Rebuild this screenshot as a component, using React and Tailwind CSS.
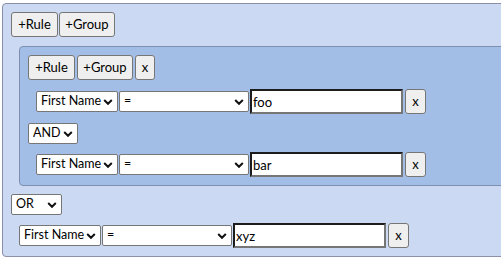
import React from 'react';

const font = { fontFamily: 'Lato, "Noto Sans", sans-serif' };

const Chevron = () => (
  <svg className="pointer-events-none absolute right-[5px] top-1/2 -translate-y-1/2" width="10" height="7" viewBox="0 0 10 7">
    <path d="M1.2 1.5l3.8 3.8 3.8-3.8" fill="none" stroke="#111" strokeWidth="2" />
  </svg>
);

const Select = ({ value, options, width }) => (
  <span className={`relative flex ${width}`}>
    <select
      defaultValue={value}
      className="h-[21px] w-full appearance-none rounded-[2px] border border-[#767676] bg-white pl-[4px] pr-[8px] text-[12.5px] leading-none text-black outline-none"
    >
      {options.map((o) => (
        <option key={o}>{o}</option>
      ))}
    </select>
    <Chevron />
  </span>
);

const Btn = ({ children, className = '' }) => (
  <button className={`h-[25px] rounded-[3px] border border-[#767676] bg-[#efefef] text-[13px] leading-none text-black ${className}`}>
    {children}
  </button>
);

const Rule = ({ value }) => (
  <div className="flex items-center">
    <Select value="First Name" options={['First Name', 'Last Name']} width="w-[82px]" />
    <span className="ml-px" />
    <Select value="=" options={['=', '!=', '<', '>']} width="w-[130px]" />
    <input
      defaultValue={value}
      className="ml-px h-[25px] w-[153px] border-2 border-t-[#1c1c1c] border-l-[#1c1c1c] border-r-[#767676] border-b-[#767676] bg-white px-[1px] text-[13px] text-black outline-none"
    />
    <Btn className="ml-[2px] w-[21px]">x</Btn>
  </div>
);

export default function App() {
  return (
    <div className="h-[261px] w-[501px] overflow-hidden bg-white" style={font}>
      <div className="ml-[2px] mt-[3px] w-[540px] rounded-[4px] border border-[#8c8fa8] bg-[#cbdaf2] pb-[8px] pl-[8px] pt-[8px]">
        <div className="flex">
          <Btn className="w-[47px]">+Rule</Btn>
          <Btn className="ml-px w-[56px]">+Group</Btn>
        </div>

        <div className="ml-[8px] mt-[9px] rounded-[4px] border border-[#7f8fb0] bg-[#a2bee6] pb-[8px] pl-[8px] pt-[8px]">
          <div className="flex">
            <Btn className="w-[47px]">+Rule</Btn>
            <Btn className="ml-[2px] w-[56px]">+Group</Btn>
            <Btn className="ml-[2px] w-[20px]">x</Btn>
          </div>
          <div className="ml-[8px] mt-[9px]">
            <Rule value="foo" />
          </div>
          <div className="mt-[9px] flex">
            <Select value="AND" options={['AND', 'OR']} width="w-[50px]" />
          </div>
          <div className="ml-[8px] mt-[8px]">
            <Rule value="bar" />
          </div>
        </div>

        <div className="mt-[8px] flex">
          <Select value="OR" options={['AND', 'OR']} width="w-[51px]" />
        </div>
        <div className="ml-[8px] mt-[8px]">
          <Rule value="xyz" />
        </div>
      </div>
    </div>
  );
}
